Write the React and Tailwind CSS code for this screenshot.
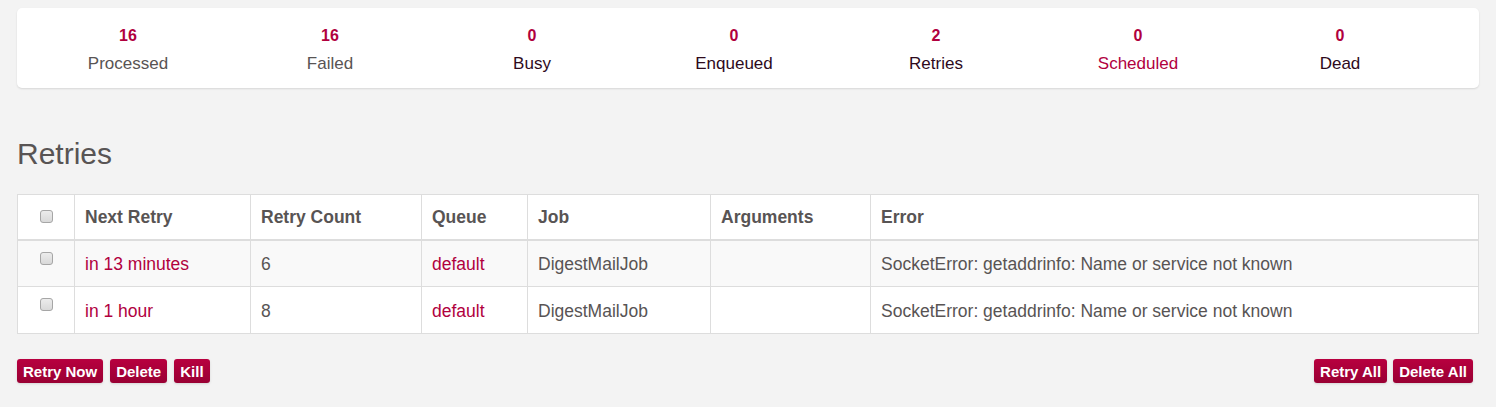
import React from "react";

const stats = [
  { value: "16", label: "Processed", tone: "text-[#585454]" },
  { value: "16", label: "Failed", tone: "text-[#585454]" },
  { value: "0", label: "Busy", tone: "text-[#2e0a1c]" },
  { value: "0", label: "Enqueued", tone: "text-[#2e0a1c]" },
  { value: "2", label: "Retries", tone: "text-[#2e0a1c]" },
  { value: "0", label: "Scheduled", tone: "text-[#b1003e]" },
  { value: "0", label: "Dead", tone: "text-[#2e0a1c]" }
];

const retries = [
  { next: "in 13 minutes", count: "6", queue: "default", job: "DigestMailJob", error: "SocketError: getaddrinfo: Name or service not known" },
  { next: "in 1 hour", count: "8", queue: "default", job: "DigestMailJob", error: "SocketError: getaddrinfo: Name or service not known" }
];

const Btn = ({ children }) => (
  <button className="h-[24px] px-[6px] rounded-[3px] bg-linear-to-b from-[#b8003f] to-[#990033] text-white text-[15px] font-bold leading-none shadow-sm">
    {children}
  </button>
);

const Check = () => (
  <input
    type="checkbox"
    className="appearance-none block mx-auto w-[13px] h-[13px] rounded-[3px] border border-[#a6a6a6] bg-linear-to-b from-[#ececec] to-[#d9d9d9]"
  />
);

const App = () => {
  return (
    <div className="min-h-screen bg-[#f3f3f3] px-[17px] pt-[8px] pb-[20px] text-[#585454] font-['Liberation_Sans',Arial,sans-serif]">
      {/* summary */}
      <div className="h-[80px] bg-white rounded-[5px] shadow-[0_1px_2px_rgba(0,0,0,0.12)]">
        <div className="ml-[10px] w-[1414px] grid grid-cols-7 pt-[17px]">
          {stats.map((s) => (
            <div key={s.label} className="flex flex-col items-center">
              <span className="text-[16px] leading-[22px] font-bold text-[#b1003e]">{s.value}</span>
              <span className={`mt-[5px] text-[17px] leading-[24px] ${s.tone}`}>{s.label}</span>
            </div>
          ))}
        </div>
      </div>

      <h3 className="mt-[49px] text-[30px] leading-[33px] font-normal">Retries</h3>

      <table className="mt-[24px] w-full table-fixed border-collapse bg-white border border-[#dddddd] text-[17.5px]">
        <colgroup>
          <col className="w-[57px]" />
          <col className="w-[176px]" />
          <col className="w-[171px]" />
          <col className="w-[106px]" />
          <col className="w-[183px]" />
          <col className="w-[160px]" />
          <col />
        </colgroup>
        <thead>
          <tr className="h-[45px] border-b-2 border-[#dddddd]">
            <th className="border border-[#dddddd] align-middle">
              <Check />
            </th>
            <th className="border border-[#dddddd] px-[10px] text-left font-bold">Next Retry</th>
            <th className="border border-[#dddddd] px-[10px] text-left font-bold">Retry Count</th>
            <th className="border border-[#dddddd] px-[10px] text-left font-bold">Queue</th>
            <th className="border border-[#dddddd] px-[10px] text-left font-bold">Job</th>
            <th className="border border-[#dddddd] px-[10px] text-left font-bold">Arguments</th>
            <th className="border border-[#dddddd] px-[10px] text-left font-bold">Error</th>
          </tr>
        </thead>
        <tbody>
          {retries.map((r, i) => (
            <tr key={i} className={`h-[47px] ${i % 2 === 0 ? "bg-[#f9f9f9]" : "bg-white"}`}>
              <td className="border border-[#dddddd] align-top pt-[11px]">
                <Check />
              </td>
              <td className="border border-[#dddddd] px-[10px] pt-[2px] text-[#b1003e]">{r.next}</td>
              <td className="border border-[#dddddd] px-[10px] pt-[2px]">{r.count}</td>
              <td className="border border-[#dddddd] px-[10px] pt-[2px] text-[#b1003e]">{r.queue}</td>
              <td className="border border-[#dddddd] px-[10px] pt-[2px]">{r.job}</td>
              <td className="border border-[#dddddd] px-[10px]"></td>
              <td className="border border-[#dddddd] px-[10px] pt-[2px]">{r.error}</td>
            </tr>
          ))}
        </tbody>
      </table>

      <div className="mt-[25px] flex justify-between">
        <div className="flex gap-[7px]">
          <Btn>Retry Now</Btn>
          <Btn>Delete</Btn>
          <Btn>Kill</Btn>
        </div>
        <div className="flex gap-[6px] mr-[6px]">
          <Btn>Retry All</Btn>
          <Btn>Delete All</Btn>
        </div>
      </div>
    </div>
  );
};

export default App;
